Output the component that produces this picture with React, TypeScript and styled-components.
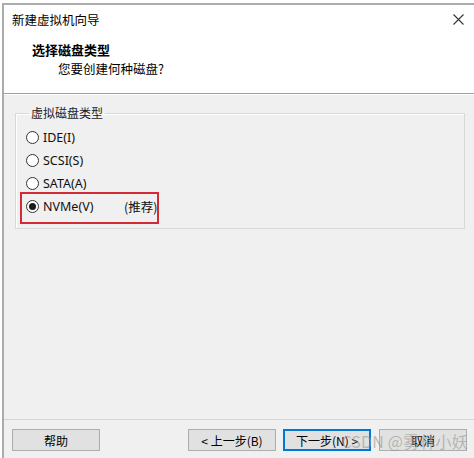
import styled, { createGlobalStyle } from 'styled-components';

const GlobalStyle = createGlobalStyle`
  html, body {
    margin: 0;
    padding: 0;
    background: #ffffff;
  }
  body {
    font-family: "Noto Sans", "Noto Sans CJK SC", sans-serif;
    color: #000;
    overflow: hidden;
  }
`;

const cjk = `"Noto Sans CJK SC", "Noto Sans", sans-serif`;

const Window = styled.div`
  position: relative;
  margin: 3px 0 0 2px;
  width: 472px;
  height: 455px;
  border-top: 2px solid #acacac;
  border-left: 2px solid #acacac;
  box-sizing: border-box;
  display: flex;
  flex-direction: column;
  background: #f0f0f0;
`;

const TitleBar = styled.div`
  height: 28px;
  display: flex;
  align-items: center;
  justify-content: space-between;
  padding: 0 10px 0 8px;
  background: #fff;
  font-family: ${cjk};
  font-size: 12.5px;
`;

const CloseIcon = () => (
  <svg width="11" height="11" viewBox="0 0 11 11">
    <path d="M0.5 0.5 L10.5 10.5 M10.5 0.5 L0.5 10.5" stroke="#333" strokeWidth="1.1" fill="none" />
  </svg>
);

const Header = styled.div`
  height: 61px;
  background: #fff;
  border-bottom: 1px solid #a0a0a0;
  box-shadow: 0 1px 0 #ffffff;
  display: flex;
  flex-direction: column;
  padding: 7px 0 0 28px;
  box-sizing: border-box;
  font-family: ${cjk};
`;

const HeaderTitle = styled.div`
  font-size: 13px;
  font-weight: 700;
  line-height: 19px;
`;

const HeaderSub = styled.div`
  font-size: 12.5px;
  line-height: 19px;
  padding-left: 26px;
`;

const Content = styled.div`
  flex: 1;
  padding: 11px 9px 0 11px;
`;

const Group = styled.fieldset`
  margin: 0;
  padding: 5px 10px 10px 10px;
  border: 1px solid #d8d8d8;
  box-shadow: inset 1px 1px 0 #fff;
  min-width: 0;
`;

const Legend = styled.legend`
  font-family: ${cjk};
  font-size: 12px;
  line-height: 16px;
  padding: 0 2px;
  margin-left: 3px;
  color: #1a1a1a;
`;

const Row = styled.label<{ $marked?: boolean }>`
  position: relative;
  height: 23px;
  display: flex;
  align-items: center;
  gap: 4px;
  font-family: "Noto Sans", "Noto Sans CJK SC", sans-serif;
  font-size: 12.5px;
  color: #111;

  ${(p) =>
    p.$marked &&
    `
    &::after {
      content: '';
      position: absolute;
      left: -6px;
      top: -3px;
      width: 139px;
      height: 32px;
      box-sizing: border-box;
      border: 2px solid #d42a33;
    }
  `}
`;

const Radio = styled.span<{ $checked?: boolean }>`
  width: 13px;
  height: 13px;
  border-radius: 50%;
  border: 1px solid #333;
  background: #fff;
  box-sizing: border-box;
  display: flex;
  align-items: center;
  justify-content: center;
  flex-shrink: 0;

  &::before {
    content: '';
    width: 7px;
    height: 7px;
    border-radius: 50%;
    background: ${(p) => (p.$checked ? '#1a1a1a' : 'transparent')};
  }
`;

const Name = styled.span`
  width: 77px;
`;

const Tag = styled.span`
  font-family: ${cjk};
  font-size: 12.5px;
`;

const Footer = styled.div`
  height: 39px;
  border-top: 1px solid #d5d5d5;
  display: flex;
  align-items: flex-start;
  padding: 9px 0 0 8px;
  box-sizing: border-box;
`;

const Button = styled.button<{ $default?: boolean }>`
  width: 88px;
  height: 22px;
  margin-right: ${(p) => (p.$default ? '8px' : '7px')};
  padding: 0;
  background: #e1e1e1;
  border: 1px solid ${(p) => (p.$default ? '#0078d7' : '#adadad')};
  box-shadow: ${(p) => (p.$default ? 'inset 0 0 0 1px #0078d7' : 'none')};
  font-family: ${cjk};
  font-size: 12px;
  color: #000;
`;

const Spacer = styled.div`
  flex: 1;
`;

const Watermark = styled.div`
  position: absolute;
  right: 6px;
  bottom: 5px;
  font-family: ${cjk};
  font-size: 16px;
  color: rgba(150, 150, 150, 0.6);
  pointer-events: none;
  letter-spacing: 0.2px;
`;

const options = [
  { name: 'IDE(I)', checked: false },
  { name: 'SCSI(S)', checked: false },
  { name: 'SATA(A)', checked: false },
  { name: 'NVMe(V)', checked: true, tag: '(推荐)' },
];

export default function App() {
  return (
    <>
      <GlobalStyle />
      <Window>
        <TitleBar>
          <span>新建虚拟机向导</span>
          <CloseIcon />
        </TitleBar>
        <Header>
          <HeaderTitle>选择磁盘类型</HeaderTitle>
          <HeaderSub>您要创建何种磁盘?</HeaderSub>
        </Header>
        <Content>
          <Group>
            <Legend>虚拟磁盘类型</Legend>
            {options.map((o) => (
              <Row key={o.name} $marked={o.checked}>
                <Radio $checked={o.checked} />
                <Name>{o.name}</Name>
                {o.tag && <Tag>{o.tag}</Tag>}
              </Row>
            ))}
          </Group>
        </Content>
        <Footer>
          <Button>帮助</Button>
          <Spacer />
          <Button>&lt; 上一步(B)</Button>
          <Button $default>下一步(N) &gt;</Button>
          <Button>取消</Button>
        </Footer>
        <Watermark>CSDN @雾林小妖</Watermark>
      </Window>
    </>
  );
}
